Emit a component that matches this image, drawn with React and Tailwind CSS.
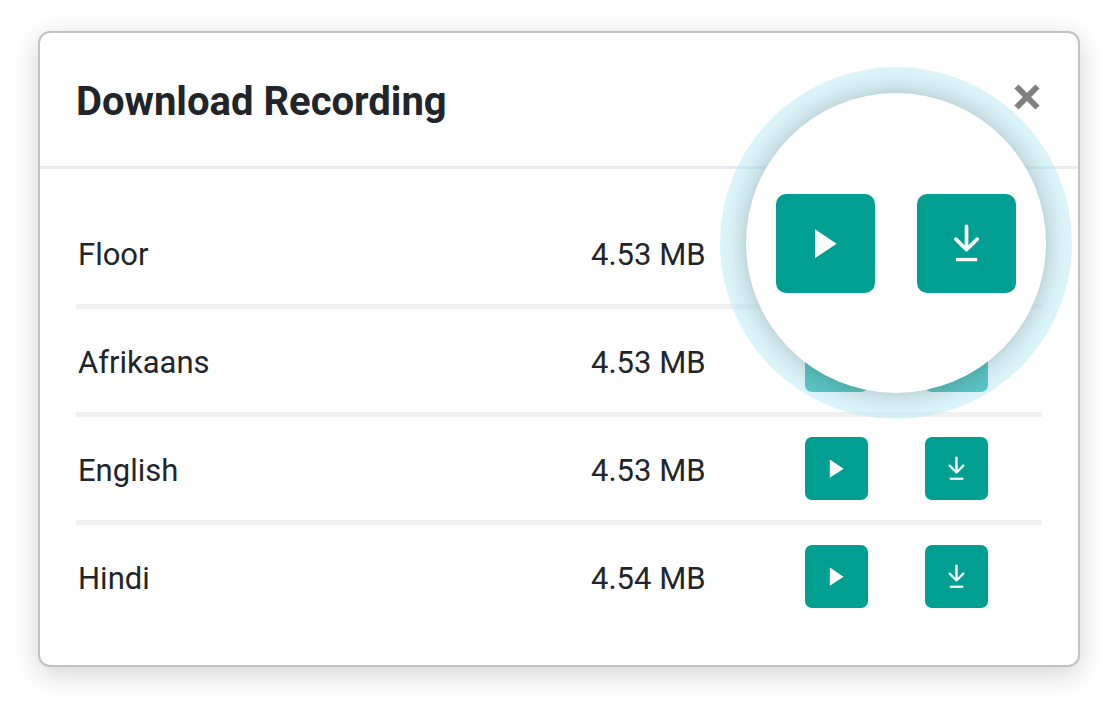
const recordings = [
  { language: 'Floor', size: '4.53 MB' },
  { language: 'Afrikaans', size: '4.53 MB' },
  { language: 'English', size: '4.53 MB' },
  { language: 'Hindi', size: '4.54 MB' },
];

function PlayIcon() {
  return (
    <svg viewBox="0 0 99 99" className="size-full" aria-hidden="true">
      <path d="M39 35.2 60.6 49.7 39 64.2Z" fill="white" />
    </svg>
  );
}

function DownloadIcon() {
  return (
    <svg viewBox="0 0 99 99" className="size-full" fill="none" stroke="white" aria-hidden="true">
      <path d="M49.5 32.4V55.4M38.8 45.1 49.5 55.8 60.2 45.1" strokeWidth="3.7" strokeLinecap="round" strokeLinejoin="round" />
      <path d="M38.9 65.6H60.2" strokeWidth="3.4" />
    </svg>
  );
}

function IconButton({ label, large, children }) {
  return (
    <button
      type="button"
      aria-label={label}
      className={
        large
          ? 'block size-[99px] shrink-0 rounded-[10px] bg-[#009f91]'
          : 'block size-[63px] rounded-[7px] bg-[#009f91]'
      }
    >
      {children}
    </button>
  );
}

function Lens() {
  return (
    <div className="absolute right-[6px] top-[34px] flex size-[352px] items-center justify-center overflow-hidden rounded-full bg-[#b6e9f6]/50">
      <div className="flex size-[300px] items-center justify-center gap-[42px] rounded-full bg-white shadow-[0_0_25px_rgba(0,0,0,0.23)]">
        <IconButton large label="Play Floor recording"><PlayIcon /></IconButton>
        <IconButton large label="Download Floor recording"><DownloadIcon /></IconButton>
      </div>
    </div>
  );
}

export default function App() {
  return (
    <div className="min-h-screen bg-white pb-11 pl-[38px] pr-10 pt-[31px] font-[Roboto,sans-serif] text-[#212529]">
      <section
        aria-labelledby="dialog-title"
        className="relative rounded-xl border-2 border-[#c2c2c2] bg-white shadow-[0_7px_28px_rgba(0,0,0,0.18)]"
      >
        <header className="flex items-start justify-between border-b-3 border-[#e9ebef] px-9 pb-10 pt-[45px]">
          <h1 id="dialog-title" className="text-[40px] font-bold leading-12">Download Recording</h1>
          <button type="button" aria-label="Close" className="mt-[5px] text-[#808080]">
            <svg viewBox="0 0 28 28" className="size-7" aria-hidden="true">
              <path d="M2.5 3.5 23.5 24.5M23.5 3.5 2.5 24.5" stroke="currentColor" strokeWidth="6" />
            </svg>
          </button>
        </header>
        <div className="px-9 pb-[37px] pt-8">
          <table className="w-full table-fixed border-collapse text-[31px] leading-10">
            <colgroup>
              <col />
              <col className="w-[214px]" />
              <col className="w-[120px]" />
              <col className="w-[117px]" />
            </colgroup>
            <tbody>
              {recordings.map((item, i) => {
                const line = i < recordings.length - 1 ? 'shadow-[inset_0_-5px_0_#f0f0f0] h-[108px] pb-[5px]' : 'h-[103px]';
                return (
                  <tr key={item.language}>
                    <th scope="row" className={`${line} pl-0.5 pt-1 text-left font-normal`}>{item.language}</th>
                    <td className={`${line} pt-1`}>{item.size}</td>
                    <td className={line}>
                      <IconButton label={`Play ${item.language}`}><PlayIcon /></IconButton>
                    </td>
                    <td className={line}>
                      <IconButton label={`Download ${item.language}`}><DownloadIcon /></IconButton>
                    </td>
                  </tr>
                );
              })}
            </tbody>
          </table>
        </div>
        <Lens />
      </section>
    </div>
  );
}
